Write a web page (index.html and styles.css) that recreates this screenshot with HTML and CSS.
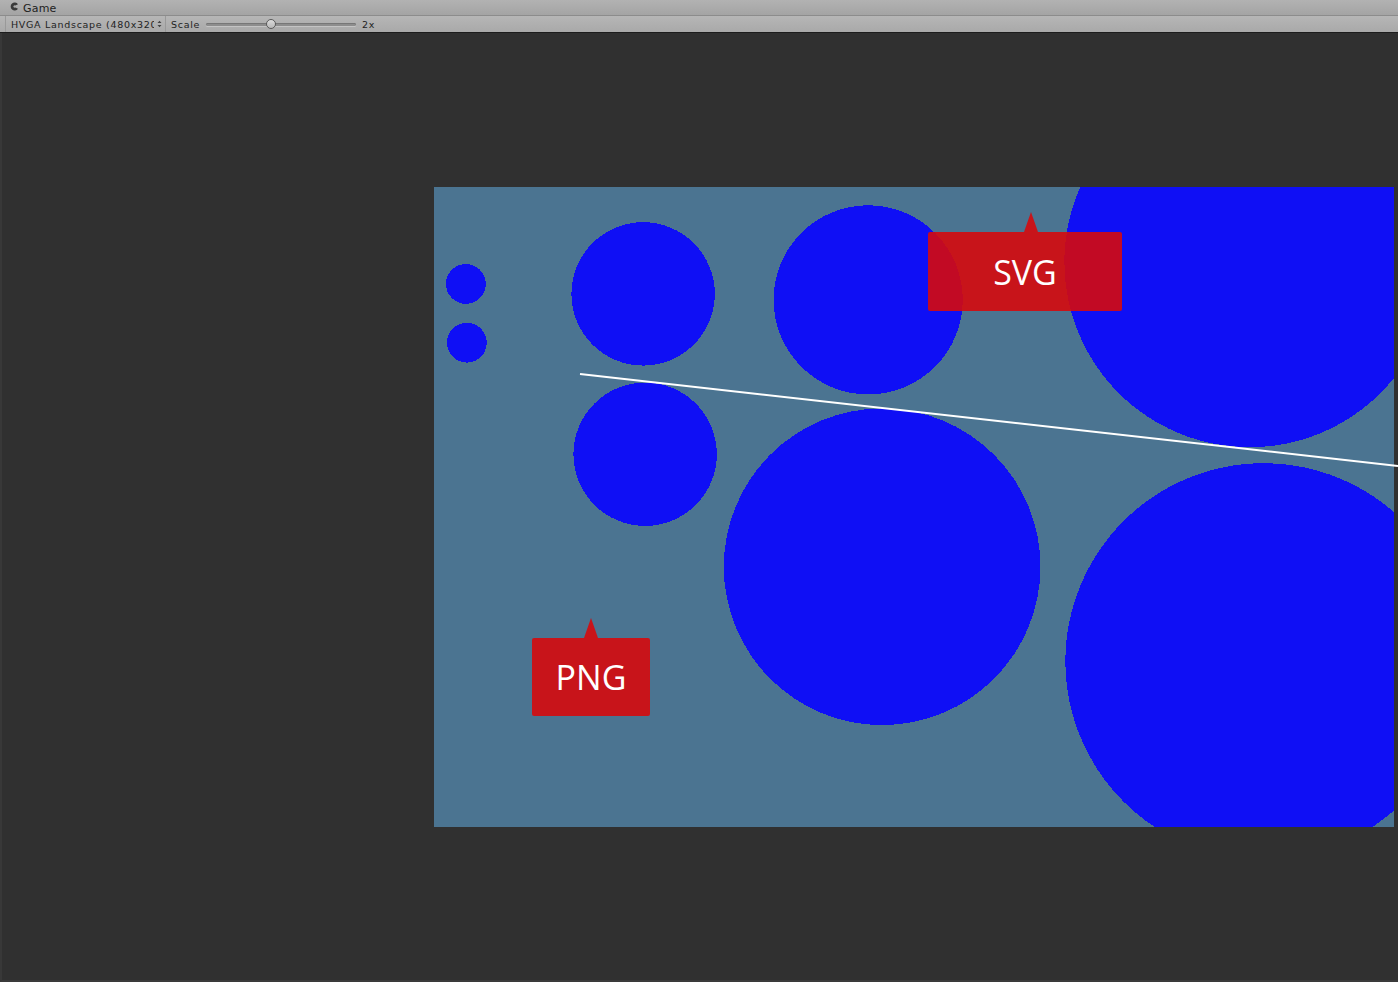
FILE: index.html
```html
<!DOCTYPE html>
<html>
<head>
<meta charset="utf-8">
<link rel="stylesheet" href="styles.css">
</head>
<body>
<div class="window">
  <div class="titlebar">
    <svg class="tab-icon" width="9" height="9" viewBox="0 0 9 9"><path d="M8 2.3 A4 4 0 1 0 8 6.7 L5.4 5.6 A1.3 1.3 0 1 1 5.4 3.4 Z" fill="#3a3a3a"/></svg>
    <span class="tab-label">Game</span>
  </div>
  <div class="toolbar">
    <div class="tb-gap"></div>
    <div class="dropdown">
      <span class="dd-text">HVGA Landscape (480x320</span>
      <svg class="dd-arrows" width="5" height="8" viewBox="0 0 5 8"><path d="M0.5 3 L2.5 0.8 L4.5 3 Z M0.5 5 L2.5 7.2 L4.5 5 Z" fill="#444"/></svg>
    </div>
    <span class="scale-label">Scale</span>
    <div class="slider"><div class="thumb"></div></div>
    <span class="scale-val">2x</span>
  </div>
  <div class="stage">
    <div class="game">
      <svg class="scene" width="964" height="640" viewBox="0 0 964 640" shape-rendering="crispEdges">
        <circle cx="32" cy="96" r="20" fill="#0f0ff5"/>
        <circle cx="33" cy="155" r="20" fill="#0f0ff5"/>
        <circle cx="210" cy="106" r="72" fill="#0f0ff5"/>
        <circle cx="436" cy="112" r="95" fill="#0f0ff5"/>
        <circle cx="212" cy="267" r="72" fill="#0f0ff5"/>
        <circle cx="450" cy="380" r="159" fill="#0f0ff5"/>
        <circle cx="819" cy="74" r="186" fill="#0f0ff5"/>
        <circle cx="833" cy="475" r="199" fill="#0f0ff5"/>
      </svg>
      <svg class="ray" width="964" height="300" viewBox="0 0 964 300"><line x1="146" y1="187" x2="964" y2="279" stroke="#ffffff" stroke-width="2"/></svg>
      <div class="tag tag-svg">SVG</div>
      <div class="tag tag-png">PNG</div>
    </div>
  </div>
</div>
</body>
</html>
```

FILE: styles.css
```css
html, body {
  margin: 0;
  padding: 0;
  background: #303030;
  overflow: hidden;
}
.window {
  width: 1398px;
  height: 982px;
  display: flex;
  flex-direction: column;
  font-family: "DejaVu Sans", "Liberation Sans", sans-serif;
}
.titlebar {
  height: 15px;
  background: linear-gradient(#b2b2b2, #a4a4a4);
  border-bottom: 1px solid #8c8c8c;
  display: flex;
  align-items: center;
  padding-left: 10px;
  gap: 4px;
}
.tab-icon { margin-top: -2px; }
.tab-label {
  font-size: 11px;
  color: #1e1e1e;
  margin-top: 2px;
  letter-spacing: 0.2px;
}
.toolbar {
  height: 16px;
  background: linear-gradient(#b6b6b6, #a9a9a9);
  border-bottom: 1px solid #1c1c1c;
  display: flex;
  align-items: center;
  font-size: 9.5px;
  color: #222;
  letter-spacing: 0.7px;
}
.tb-gap {
  width: 5px;
  height: 16px;
  border-right: 1px solid #999;
}
.dropdown {
  width: 160px;
  height: 16px;
  display: flex;
  align-items: center;
  border-right: 1px solid #999;
  box-sizing: border-box;
  padding-left: 5px;
}
.dd-text {
  width: 143px;
  overflow: hidden;
  white-space: nowrap;
}
.dd-arrows { margin-left: 3px; }
.scale-label { margin-left: 5px; }
.slider {
  width: 150px;
  height: 3px;
  margin-left: 6px;
  border-radius: 2px;
  background: #8d8d8d;
  box-shadow: inset 0 1px 0 #777, 0 1px 0 #c4c4c4;
  position: relative;
}
.thumb {
  position: absolute;
  left: 60px;
  top: -4px;
  width: 10px;
  height: 10px;
  box-sizing: border-box;
  border-radius: 50%;
  border: 1px solid #5a5a5a;
  background: linear-gradient(#dcdcdc, #b8b8b8);
}
.scale-val { margin-left: 6px; }
.stage {
  flex: 1;
  border-left: 2px solid #383838;
  border-bottom: 2px solid #3a3a3a;
  padding-left: 432px;
  padding-top: 154px;
}
.game {
  width: 960px;
  height: 640px;
  background: #4b7491;
  position: relative;
}
.scene {
  position: absolute;
  left: 0;
  top: 0;
  width: 960px;
  overflow: hidden;
}
.ray {
  position: absolute;
  left: 0;
  top: 0;
  overflow: visible;
}
.tag {
  position: absolute;
  background: rgba(214, 10, 13, 0.9);
  border-radius: 2px;
  color: #fff;
  font-family: "Open Sans", "Noto Sans", sans-serif;
  display: flex;
  align-items: center;
  justify-content: center;
}
.tag::before {
  content: "";
  position: absolute;
  top: -20px;
  border-left: 7px solid transparent;
  border-right: 7px solid transparent;
  border-bottom: 20px solid rgba(214, 10, 13, 0.9);
}
.tag-svg {
  left: 494px;
  top: 45px;
  width: 194px;
  height: 79px;
  font-size: 34px;
}
.tag-svg::before { left: 96px; }
.tag-png {
  left: 98px;
  top: 451px;
  width: 118px;
  height: 78px;
  font-size: 34px;
}
.tag-png::before { left: 52px; }
```
